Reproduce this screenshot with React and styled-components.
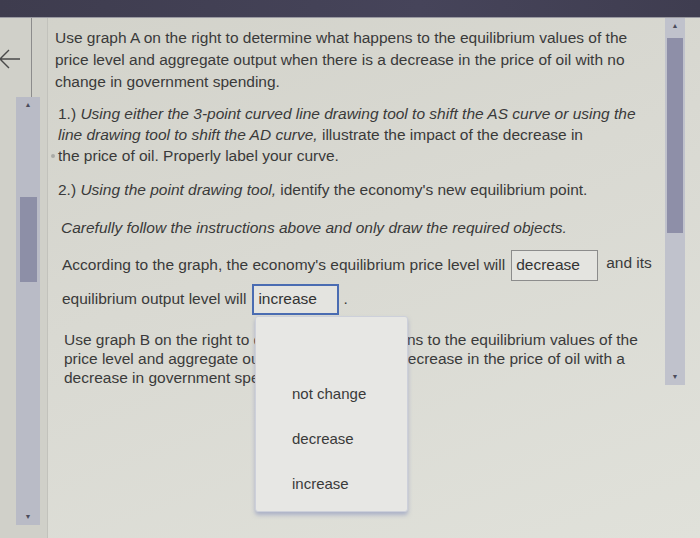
import React from "react";
import styled, { createGlobalStyle } from "styled-components";

const GlobalStyle = createGlobalStyle`
  html, body {
    margin: 0;
    padding: 0;
    background: #d8d8d1;
  }
  * {
    box-sizing: border-box;
  }
`;

const options = ["", "not change", "decrease", "increase"];

function App() {
  return (
    <Page>
      <GlobalStyle />
      <TopBar />
      <Body>
        <LeftRail>
          <BackArea>
            <svg width="24" height="24" viewBox="0 0 24 24">
              <path
                d="M22 12 H2 M11 3 L2 12 L11 21"
                fill="none"
                stroke="#4a4a4a"
                strokeWidth="1.4"
              />
            </svg>
          </BackArea>
          <SideScroll>
            <Arrow>▲</Arrow>
            <SideTrack>
              <SideThumb />
            </SideTrack>
            <Arrow>▼</Arrow>
          </SideScroll>
        </LeftRail>

        <Content>
          <Para $indent={7} $lh={22} $mt={9}>
            <Line>Use graph A on the right to determine what happens to the equilibrium values of the</Line>
            <Line>price level and aggregate output when there is a decrease in the price of oil with no</Line>
            <Line>change in government spending.</Line>
          </Para>

          <Para $indent={10} $lh={21} $mt={10}>
            <Line>
              1.) <em>Using either the 3-point curved line drawing tool to shift the AS curve or using the</em>
            </Line>
            <Line>
              <em>line drawing tool to shift the AD curve,</em> illustrate the impact of the decrease in
            </Line>
            <Line>
              <Dot />
              the price of oil. Properly label your curve.
            </Line>
          </Para>

          <Para $indent={10} $lh={21} $mt={13}>
            <Line>
              2.) <em>Using the point drawing tool,</em> identify the economy's new equilibrium point.
            </Line>
          </Para>

          <Para $indent={13} $lh={21} $mt={17}>
            <Line>
              <em>Carefully follow the instructions above and only draw the required objects.</em>
            </Line>
          </Para>

          <AnswerRow $indent={14} $mt={10}>
            According to the graph, the economy's equilibrium price level will
            <SelectBox>decrease</SelectBox>
            <After>and its</After>
          </AnswerRow>
          <AnswerRow $indent={14} $mt={0}>
            equilibrium output level will
            <SelectBox $active>increase</SelectBox>
            <After $tight>.</After>
          </AnswerRow>

          <Para $indent={16} $lh={19} $mt={14}>
            <Line>Use graph B on the right to determine what happens to the equilibrium values of the</Line>
            <Line>price level and aggregate output when there is a decrease in the price of oil with a</Line>
            <Line>decrease in government spending.</Line>
          </Para>
        </Content>

        <RightRail>
          <MainScroll>
            <Arrow>▲</Arrow>
            <MainTrack>
              <MainThumb />
            </MainTrack>
            <Arrow>▼</Arrow>
          </MainScroll>
        </RightRail>
      </Body>

      <Dropdown>
        {options.map((o, i) => (
          <Option key={i}>{o}</Option>
        ))}
      </Dropdown>
    </Page>
  );
}

export default App;

const Page = styled.div`
  position: relative;
  width: 700px;
  height: 538px;
  overflow: hidden;
  display: flex;
  flex-direction: column;
  background: linear-gradient(160deg, #d2d2ca 0%, #d9d9d2 45%, #e0e1da 100%);
  font-family: "Liberation Sans", Arial, sans-serif;
  color: #3a3a3a;
`;

const TopBar = styled.div`
  height: 18px;
  flex-shrink: 0;
  background: linear-gradient(90deg, #3e3c4e, #46445a 60%, #3f3d50);
  border-bottom: 1px solid #9a9aa2;
`;

const Body = styled.div`
  flex: 1;
  display: flex;
`;

const LeftRail = styled.div`
  width: 48px;
  flex-shrink: 0;
  display: flex;
  flex-direction: column;
  background: #d0d0c9;
  border-right: 1px solid #c2c2bc;
`;

const BackArea = styled.div`
  width: 34px;
  height: 79px;
  border-right: 1px solid #8c8c8c;
  padding-top: 29px;
  margin-left: -2px;
  display: flex;
  align-items: flex-start;
`;

const SideScroll = styled.div`
  margin-left: 16px;
  width: 24px;
  height: 428px;
  background: #b9bbc6;
  display: flex;
  flex-direction: column;
  align-items: center;
`;

const Arrow = styled.div`
  font-size: 7px;
  line-height: 16px;
  height: 16px;
  color: #4c4c5c;
`;

const SideTrack = styled.div`
  flex: 1;
  width: 100%;
  padding: 84px 3px 0 4px;
`;

const SideThumb = styled.div`
  height: 85px;
  background: #8d8fa7;
`;

const Content = styled.div`
  flex: 1;
  display: flex;
  flex-direction: column;
  font-size: 15.5px;
`;

const Para = styled.div`
  margin-top: ${(p) => p.$mt}px;
  padding-left: ${(p) => p.$indent}px;
  line-height: ${(p) => p.$lh}px;
`;

const Line = styled.div`
  position: relative;
  white-space: nowrap;
  em {
    font-style: italic;
  }
`;

const Dot = styled.span`
  position: absolute;
  left: -7px;
  top: 9px;
  width: 4px;
  height: 4px;
  border-radius: 50%;
  background: #a9aaa6;
`;

const AnswerRow = styled.div`
  margin-top: ${(p) => p.$mt}px;
  padding-left: ${(p) => p.$indent}px;
  height: 34px;
  display: flex;
  align-items: center;
  white-space: nowrap;
`;

const SelectBox = styled.div`
  margin-left: 6px;
  width: 87px;
  height: 31px;
  padding-left: 4px;
  display: flex;
  align-items: center;
  background: #e4e4e0;
  border: ${(p) => (p.$active ? "2px solid #4a6cb2" : "1px solid #8c8c8c")};
  color: #333;
`;

const After = styled.span`
  margin-left: ${(p) => (p.$tight ? 4 : 8)}px;
  align-self: ${(p) => (p.$tight ? "center" : "flex-start")};
  padding-top: ${(p) => (p.$tight ? 0 : 6)}px;
`;

const RightRail = styled.div`
  width: 35px;
  flex-shrink: 0;
`;

const MainScroll = styled.div`
  width: 20px;
  height: 367px;
  background: #c0c2cc;
  display: flex;
  flex-direction: column;
  align-items: center;
`;

const MainTrack = styled.div`
  flex: 1;
  width: 100%;
  padding: 4px 2px 0 2px;
`;

const MainThumb = styled.div`
  height: 195px;
  background: #8e8fa8;
`;

const Dropdown = styled.div`
  position: absolute;
  left: 255px;
  top: 316px;
  width: 153px;
  height: 196px;
  padding-top: 9px;
  background: #e7e7e4;
  border: 1px solid #cdd0da;
  border-radius: 3px;
  box-shadow: 0 3px 4px rgba(130, 140, 185, 0.55);
  font-size: 15px;
`;

const Option = styled.div`
  height: 45px;
  padding-left: 36px;
  display: flex;
  align-items: center;
  color: #3a3a3a;
`;
